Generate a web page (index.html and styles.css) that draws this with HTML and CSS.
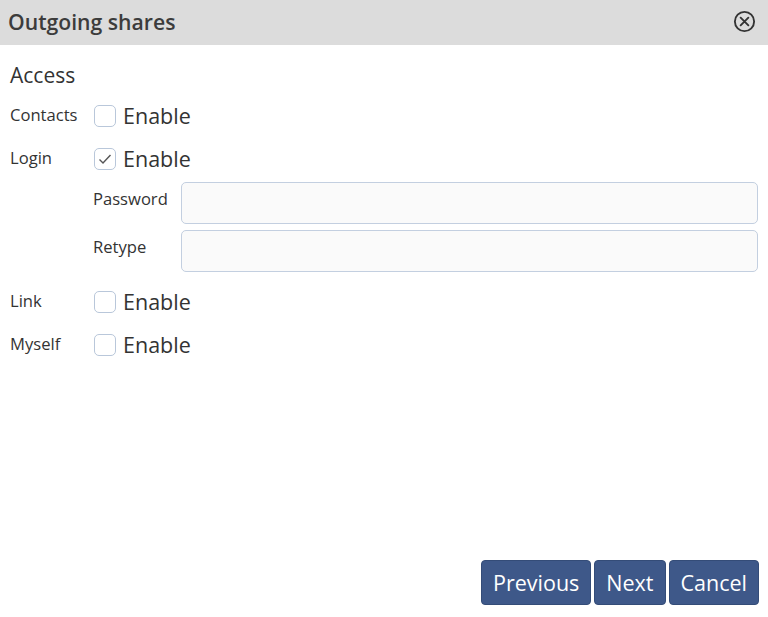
FILE: index.html
```html
<!DOCTYPE html>
<html>
<head>
<meta charset="utf-8">
<link rel="stylesheet" href="styles.css">
</head>
<body>
<div class="dialog">
  <div class="header">
    <div class="title">Outgoing shares</div>
    <svg class="close" width="23" height="23" viewBox="0 0 22 22">
      <circle cx="11" cy="11" r="9.2" fill="none" stroke="#333" stroke-width="1.8"/>
      <path d="M7.3 7.3 L14.7 14.7 M14.7 7.3 L7.3 14.7" stroke="#333" stroke-width="1.8" stroke-linecap="round"/>
    </svg>
  </div>
  <div class="content">
    <div class="section-title">Access</div>
    <div class="row">
      <div class="label">Contacts</div>
      <label class="check"><span class="box"></span><span class="check-text">Enable</span></label>
    </div>
    <div class="row row-login">
      <div class="label">Login</div>
      <label class="check"><span class="box checked"><svg width="14" height="12" viewBox="0 0 14 12"><path d="M1.5 6.5 L5 10 L12.5 2" fill="none" stroke="#555" stroke-width="1.4"/></svg></span><span class="check-text">Enable</span></label>
    </div>
    <div class="sub">
      <div class="sub-row">
        <div class="sub-label">Password</div>
        <div class="input"></div>
      </div>
      <div class="sub-row">
        <div class="sub-label">Retype</div>
        <div class="input"></div>
      </div>
    </div>
    <div class="row">
      <div class="label">Link</div>
      <label class="check"><span class="box"></span><span class="check-text">Enable</span></label>
    </div>
    <div class="row">
      <div class="label">Myself</div>
      <label class="check"><span class="box"></span><span class="check-text">Enable</span></label>
    </div>
  </div>
  <div class="footer">
    <button class="btn">Previous</button>
    <button class="btn">Next</button>
    <button class="btn">Cancel</button>
  </div>
</div>
</body>
</html>
```

FILE: styles.css
```css
html, body {
  margin: 0;
  padding: 0;
  background: #ffffff;
}
body {
  font-family: "Open Sans", "Noto Sans", sans-serif;
  color: #333333;
}
.dialog {
  width: 768px;
  height: 617px;
  display: flex;
  flex-direction: column;
  box-sizing: border-box;
}
.header {
  height: 45px;
  background: #dcdcdc;
  display: flex;
  align-items: center;
  justify-content: space-between;
  padding: 0 12px 0 8px;
  flex-shrink: 0;
}
.title {
  font-size: 21.2px;
  font-weight: 600;
  color: #3c3c3c;
  margin-top: -3px;
}
.close {
  display: block;
  margin-top: -3px;
}
.content {
  padding: 17px 10px 0 10px;
  flex: 1;
}
.section-title {
  font-size: 21px;
  line-height: 27px;
  margin-bottom: 15px;
}
.row {
  display: flex;
  align-items: flex-start;
  height: 43px;
}
.row-login {
  height: 35px;
}
.label {
  width: 84px;
  font-size: 16.6px;
  line-height: 22px;
}
.check {
  display: flex;
  align-items: center;
  gap: 7px;
}
.box {
  width: 20px;
  height: 20px;
  border: 1.5px solid #b9c7da;
  border-radius: 5px;
  display: flex;
  align-items: center;
  justify-content: center;
  background: #fff;
}
.check-text {
  font-size: 21.5px;
  line-height: 23px;
  color: #333;
}
.sub {
  padding-left: 83px;
  margin-bottom: 18px;
}
.sub-row {
  display: flex;
  align-items: flex-start;
}
.sub-row + .sub-row {
  margin-top: 6px;
}
.sub-label {
  width: 88px;
  font-size: 16.6px;
  line-height: 22px;
  padding-top: 6px;
}
.input {
  flex: 1;
  height: 40px;
  border: 1.5px solid #c3cfe0;
  border-radius: 5px;
  background: #fafafa;
}
.footer {
  display: flex;
  justify-content: flex-end;
  gap: 3px;
  padding: 0 9px 12px 0;
}
.btn {
  font-family: "Open Sans", "Noto Sans", sans-serif;
  font-size: 21.5px;
  color: #ffffff;
  background: #3e5889;
  border: 1px solid #344c78;
  border-radius: 4px;
  height: 45px;
  padding: 0 11px;
}
```
